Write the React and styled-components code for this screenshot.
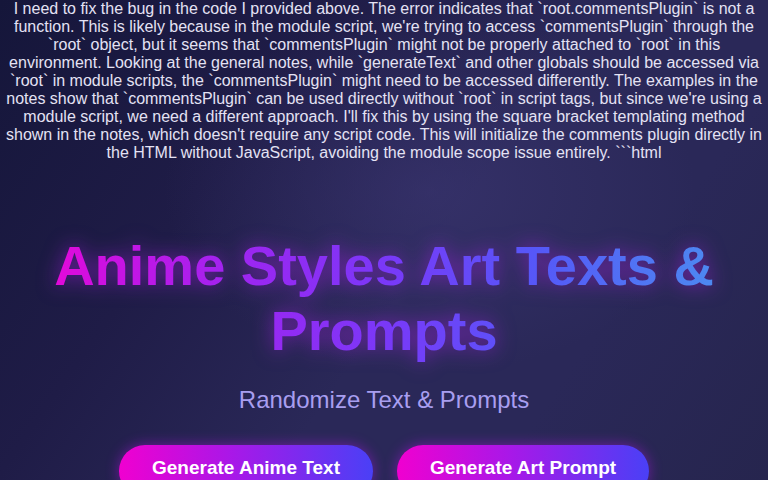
import styled, { createGlobalStyle } from 'styled-components'

const GlobalStyle = createGlobalStyle`
  html, body {
    margin: 0;
    padding: 0;
    background: #1f1c45;
  }
  body {
    font-family: "Liberation Sans", Arial, sans-serif;
  }
`

const Page = styled.div`
  width: 768px;
  height: 480px;
  overflow: hidden;
  box-sizing: border-box;
  display: flex;
  flex-direction: column;
  align-items: center;
  background:
    radial-gradient(ellipse 380px 260px at 56% 40%, rgba(62, 56, 118, 0.55), transparent 70%),
    linear-gradient(125deg, #15163a 0%, #1f1c47 30%, #2a2858 55%, #2a2858 75%, #26254e 100%);
`

const Note = styled.p`
  margin: 0;
  padding: 0 4px;
  font-size: 16px;
  line-height: 18px;
  color: #e4e2f4;
  text-align: center;
`

const Header = styled.header`
  width: 100%;
  margin-top: 71px;
  display: flex;
  flex-direction: column;
  align-items: center;
`

const Title = styled.h1`
  margin: 0;
  padding: 0 40px;
  box-sizing: border-box;
  width: 100%;
  font-size: 56px;
  font-weight: 700;
  line-height: normal;
  text-align: center;
  background: linear-gradient(90deg, #ff00d0 0%, #d010e0 12%, #a024f0 30%, #7a38f8 50%, #5558f8 70%, #4a98ee 100%);
  -webkit-background-clip: text;
  background-clip: text;
  color: transparent;
  filter: drop-shadow(0 0 10px rgba(190, 30, 255, 0.55));
`

const Subtitle = styled.h2`
  margin: 23px 0 0;
  font-size: 24px;
  font-weight: 400;
  line-height: normal;
  color: #a89ef0;
`

const Actions = styled.div`
  margin-top: 31px;
  display: flex;
  gap: 24px;
`

const GenButton = styled.button`
  font-family: "Liberation Sans", Arial, sans-serif;
  font-size: 19px;
  font-weight: 700;
  color: #fff;
  border: none;
  border-radius: 40px;
  padding: 12px 31px 18px;
  line-height: 22px;
  cursor: pointer;
  background: linear-gradient(90deg, #f000d0 0%, #a818e8 45%, #4a40f6 100%);
  box-shadow: 0 0 14px rgba(200, 20, 255, 0.45);
  width: ${p => p.$w}px;
`

const App = () => {
  return (
    <>
      <GlobalStyle />
      <Page>
        <Note>
          I need to fix the bug in the code I provided above. The error indicates that `root.commentsPlugin` is not a function. This is likely because in the module script, we're trying to access `commentsPlugin` through the `root` object, but it seems that `commentsPlugin` might not be properly attached to `root` in this environment. Looking at the general notes, while `generateText` and other globals should be accessed via `root` in module scripts, the `commentsPlugin` might need to be accessed differently. The examples in the notes show that `commentsPlugin` can be used directly without `root` in script tags, but since we're using a module script, we need a different approach. I'll fix this by using the square bracket templating method shown in the notes, which doesn't require any script code. This will initialize the comments plugin directly in the HTML without JavaScript, avoiding the module scope issue entirely. ```html
        </Note>
        <Header>
          <Title>Anime Styles Art Texts &amp; Prompts</Title>
          <Subtitle>Randomize Text &amp; Prompts</Subtitle>
          <Actions>
            <GenButton $w={254}>Generate Anime Text</GenButton>
            <GenButton $w={252}>Generate Art Prompt</GenButton>
          </Actions>
        </Header>
      </Page>
    </>
  )
}

export default App
